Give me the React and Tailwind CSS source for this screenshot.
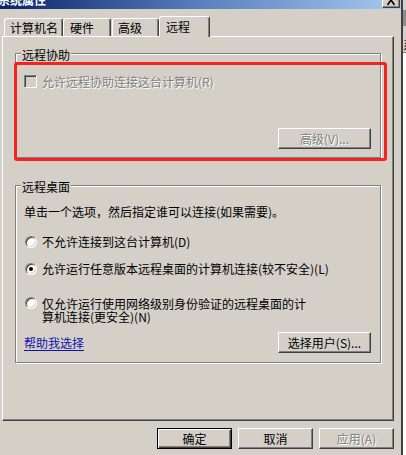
import React from 'react';

const FONT = 'font-["Noto_Sans_CJK_SC","Noto_Sans",sans-serif]';
const DIS = 'text-[#808080] [text-shadow:1px_1px_0_#fff]';

function Tab({ label, selected, className }) {
  return (
    <div
      className={`flex items-center rounded-t-[3px] border-t border-l border-r border-t-white border-l-white border-r-[#404040] bg-[#d4d0c8] shadow-[inset_-1px_0_0_#808080] leading-[14px] ${
        selected ? 'h-[21px] -mb-[1px]' : 'h-[18px]'
      } ${className}`}
    >
      {label}
    </div>
  );
}

function Group({ title, className, children }) {
  return (
    <div className={`flex flex-col border border-[#808080] shadow-[inset_1px_1px_0_#fff,1px_1px_0_#fff] ${className}`}>
      <div className="-mt-[6px] ml-[5px] w-fit bg-[#d4d0c8] px-[1px] leading-[14px]">{title}</div>
      {children}
    </div>
  );
}

function Btn({ children, disabled, isDefault, className }) {
  const edge = isDefault
    ? 'border border-black shadow-[inset_1px_1px_0_#fff,inset_-1px_-1px_0_#404040,inset_-2px_-2px_0_#808080]'
    : 'border border-t-white border-l-white border-r-[#404040] border-b-[#404040] shadow-[inset_-1px_-1px_0_#808080]';
  return (
    <div className={`flex h-[21px] items-center justify-center bg-[#d4d0c8] leading-[14px] ${edge} ${disabled ? DIS : ''} ${className}`}>
      {children}
    </div>
  );
}

function Radio({ checked }) {
  return (
    <span className="flex h-[12px] w-[12px] shrink-0 items-center justify-center rounded-full border border-t-[#808080] border-l-[#808080] border-r-white border-b-white bg-white shadow-[inset_1px_1px_0_#404040,inset_-1px_-1px_0_#d4d0c8]">
      {checked && <span className="h-[4px] w-[4px] rounded-full bg-black" />}
    </span>
  );
}

export default function App() {
  return (
    <div className={`relative flex h-[455px] w-[406px] overflow-hidden bg-[#d4d0c8] text-[12px] text-black ${FONT}`}>
      {/* dialog window */}
      <div className="flex h-full w-[403px] shrink-0 flex-col border-r-2 border-r-[#404040]">
        {/* title bar, cut off at the top */}
        <div className="flex h-[9px] shrink-0 items-start justify-between overflow-hidden bg-gradient-to-r from-[#0a246a] via-[#5b7fbd] to-[#a6caf0]">
          <span className="-ml-[2px] -mt-[6px] whitespace-nowrap text-[12px] font-bold leading-[12px] text-white">系统属性</span>
          <div className="mr-[1px] flex h-[8px] w-[18px] justify-center border-r border-b border-l border-r-[#404040] border-b-[#404040] border-l-white bg-[#d4d0c8] shadow-[inset_-1px_-1px_0_#808080]">
            <svg width="10" height="6" viewBox="0 0 10 6">
              <path d="M5 0 L1.5 5 M5 0 L8.5 5" stroke="#000" strokeWidth="1.6" fill="none" />
            </svg>
          </div>
        </div>

        {/* tabs */}
        <div className="relative z-10 mt-[7px] flex h-[20px] items-end pl-[4px]">
          <Tab label="计算机名" className="w-[59px] pl-[5px]" />
          <Tab label="硬件" className="w-[48px] pl-[6px]" />
          <Tab label="高级" className="ml-[1px] w-[47px] pl-[5px]" />
          <Tab label="远程" selected className="w-[51px] pl-[6px]" />
        </div>

        {/* tab page */}
        <div className="ml-[2px] flex h-[385px] w-[392px] shrink-0 flex-col border-t border-l border-r border-b border-t-white border-l-white border-r-[#404040] border-b-[#404040] shadow-[inset_-1px_-1px_0_#808080]">
          <Group title="远程协助" className="ml-[12px] mt-[16px] w-[366px]">
            <div className="ml-[8px] mt-[13px] flex h-[13px] items-center gap-[5px]">
              <span className="h-[13px] w-[13px] shrink-0 border border-t-[#808080] border-l-[#808080] border-r-white border-b-white bg-[#d4d0c8] shadow-[inset_1px_1px_0_#404040]" />
              <span className={`leading-[13px] ${DIS}`}>允许远程协助连接这台计算机(R)</span>
            </div>
            <Btn disabled className="mr-[9px] mt-[40px] mb-[8px] w-[93px] self-end">高级(V)...</Btn>
          </Group>

          <Group title="远程桌面" className="ml-[12px] mt-[27px] w-[366px]">
            <div className="ml-[8px] mt-[11px] leading-[14px]">单击一个选项，然后指定谁可以连接(如果需要)。</div>

            <div className="ml-[9px] mt-[16px] flex h-[13px] items-center gap-[5px]">
              <Radio />
              <span className="leading-[13px]">不允许连接到这台计算机(D)</span>
            </div>
            <div className="ml-[9px] mt-[14px] flex h-[13px] items-center gap-[5px]">
              <Radio checked />
              <span className="leading-[13px]">允许运行任意版本远程桌面的计算机连接(较不安全)(L)</span>
            </div>
            <div className="ml-[9px] mt-[22px] flex items-start gap-[5px]">
              <Radio />
              <span className="leading-[13px]">
                仅允许运行使用网络级别身份验证的远程桌面的计
                <br />
                算机连接(更安全)(N)
              </span>
            </div>

            <div className="mt-[9px] mb-[9px] flex items-center justify-between pl-[8px] pr-[9px]">
              <span className="leading-[14px] text-[#1010b0] underline underline-offset-[2px]">帮助我选择</span>
              <Btn className="w-[93px]">选择用户(S)...</Btn>
            </div>
          </Group>
        </div>

        {/* dialog buttons */}
        <div className="mt-[7px] flex gap-[6px] pl-[157px]">
          <Btn isDefault className="w-[75px]">确定</Btn>
          <Btn className="w-[75px]">取消</Btn>
          <Btn disabled className="w-[75px]">应用(A)</Btn>
        </div>
      </div>

      {/* sliver of the window behind */}
      <div className="flex w-[3px] flex-col">
        <div className="h-[10px] bg-[#d4d0c8]" />
        <div className="h-[16px] bg-[#8c8c8c]" />
        <div className="h-[11px] bg-[#d4d0c8]" />
        <div className="h-[15px] overflow-hidden whitespace-nowrap bg-[#d4d0c8] leading-[15px]">系</div>
        <div className="h-[1px] bg-[#808080]" />
        <div className="flex-1 bg-white" />
      </div>

      {/* red annotation box */}
      <div className="pointer-events-none absolute left-[14px] top-[62px] h-[99px] w-[373px] rounded-[3px] border-[3px] border-[#f52222]" />
    </div>
  );
}
